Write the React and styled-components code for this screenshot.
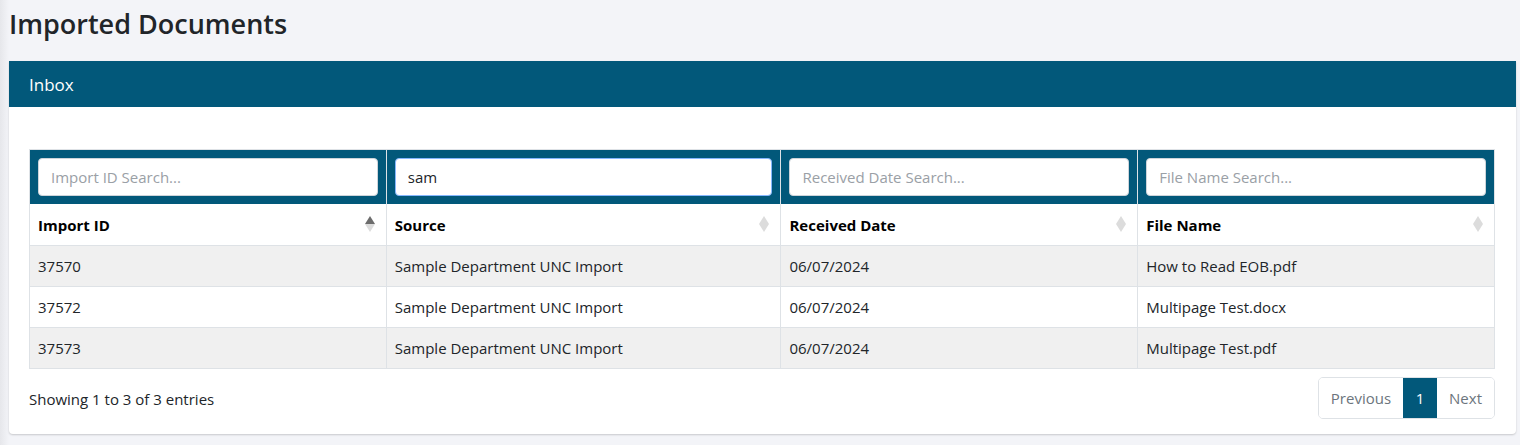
import React, { useState } from 'react';
import styled, { createGlobalStyle } from 'styled-components';

const GlobalStyle = createGlobalStyle`
  body {
    margin: 0;
    background: #f3f4f8;
    font-family: "Open Sans", "Noto Sans", Arial, sans-serif;
    color: #212529;
  }
  * { box-sizing: border-box; }
`;

const Page = styled.main`
  padding: 0 4px 0 9px;
  min-height: 445px;
  background: linear-gradient(to right, #e6e7eb 0, #f3f4f8 9px);
`;

const Title = styled.h1`
  margin: 0;
  padding: 5px 0 0;
  height: 61px;
  font-size: 27px;
  font-weight: 600;
  color: #212529;
`;

const Card = styled.section`
  background: #fff;
  border-radius: 0 0 4px 4px;
  box-shadow: 0 1px 2px rgba(0, 0, 0, 0.18);
`;

const CardHeader = styled.header`
  background: #02587a;
  color: #fff;
  height: 46px;
  padding: 0 20px;
  display: flex;
  align-items: center;
  font-size: 17px;
`;

const CardBody = styled.div`
  padding: 42px 21px 15px 20px;
`;

const Table = styled.table`
  width: 100%;
  border-collapse: collapse;
  font-size: 15px;
  border: 1px solid #dee2e6;
`;

const FilterCell = styled.th`
  background: #02587a;
  padding: 8px 8px;
  border-left: 1px solid #dee2e6;
  &:first-child { border-left: none; }
`;

const SearchInput = styled.input`
  width: 100%;
  height: 38px;
  border: 1px solid #ced4da;
  border-radius: 4px;
  padding: 0 12px;
  font: inherit;
  font-size: 15px;
  font-weight: 400;
  color: #212529;
  outline: none;
  &::placeholder { color: #9aa0a6; }
  ${p => p.$active && `
    border-color: #86b7fe;
  `}
`;

const HeadCell = styled.th`
  text-align: left;
  font-weight: 700;
  color: #000;
  height: 41px;
  padding: 1px 8px 0;
  border: 1px solid #dee2e6;
  border-top: none;
  position: relative;
  width: ${p => p.$w};
`;

const SortIcon = styled.span`
  position: absolute;
  right: 11px;
  top: 50%;
  transform: translateY(-50%);
  display: flex;
  flex-direction: column;
  &::before, &::after {
    content: '';
    width: 0;
    height: 0;
    border-left: 5px solid transparent;
    border-right: 5px solid transparent;
  }
  &::before {
    border-bottom: 8px solid ${p => (p.$dir === 'asc' ? '#6c6c6c' : '#dcdcdc')};
  }
  &::after {
    border-top: 8px solid #dcdcdc;
  }
`;

const Row = styled.tr`
  background: ${p => (p.$odd ? '#f0f0f0' : '#fff')};
`;

const Cell = styled.td`
  height: 41px;
  padding: 0 8px;
  border: 1px solid #dee2e6;
  color: #212529;
`;

const Footer = styled.div`
  display: flex;
  justify-content: space-between;
  align-items: center;
  margin-top: 8px;
  font-size: 15px;
  & > span { padding-top: 3px; }
`;

const Pager = styled.nav`
  display: flex;
  border: 1px solid #dee2e6;
  border-radius: 5px;
  overflow: hidden;
  height: 42px;
`;

const PageButton = styled.button`
  border: none;
  background: ${p => (p.$current ? '#02587a' : '#fff')};
  color: ${p => (p.$current ? '#fff' : '#6c757d')};
  font: inherit;
  font-size: 15px;
  padding: 0 12px;
  min-width: 34px;
  cursor: pointer;
`;

const columns = [
  { key: 'id', label: 'Import ID', placeholder: 'Import ID Search...', w: '357px', sort: 'asc' },
  { key: 'source', label: 'Source', placeholder: 'Source Search...', w: '395px' },
  { key: 'date', label: 'Received Date', placeholder: 'Received Date Search...', w: '357px' },
  { key: 'file', label: 'File Name', placeholder: 'File Name Search...', w: '357px' },
];

const rows = [
  { id: '37570', source: 'Sample Department UNC Import', date: '06/07/2024', file: 'How to Read EOB.pdf' },
  { id: '37572', source: 'Sample Department UNC Import', date: '06/07/2024', file: 'Multipage Test.docx' },
  { id: '37573', source: 'Sample Department UNC Import', date: '06/07/2024', file: 'Multipage Test.pdf' },
];

export default function App() {
  const [filters, setFilters] = useState({ id: '', source: 'sam', date: '', file: '' });

  return (
    <>
      <GlobalStyle />
      <Page>
        <Title>Imported Documents</Title>
        <Card>
          <CardHeader>Inbox</CardHeader>
          <CardBody>
            <Table>
              <thead>
                <tr>
                  {columns.map(col => (
                    <FilterCell key={col.key}>
                      <SearchInput
                        placeholder={col.placeholder}
                        value={filters[col.key]}
                        $active={col.key === 'source'}
                        onChange={e => setFilters({ ...filters, [col.key]: e.target.value })}
                      />
                    </FilterCell>
                  ))}
                </tr>
                <tr>
                  {columns.map(col => (
                    <HeadCell key={col.key} $w={col.w}>
                      {col.label}
                      <SortIcon $dir={col.sort} />
                    </HeadCell>
                  ))}
                </tr>
              </thead>
              <tbody>
                {rows.map((row, i) => (
                  <Row key={row.id} $odd={i % 2 === 0}>
                    {columns.map(col => (
                      <Cell key={col.key}>{row[col.key]}</Cell>
                    ))}
                  </Row>
                ))}
              </tbody>
            </Table>
            <Footer>
              <span>Showing 1 to 3 of 3 entries</span>
              <Pager>
                <PageButton>Previous</PageButton>
                <PageButton $current>1</PageButton>
                <PageButton>Next</PageButton>
              </Pager>
            </Footer>
          </CardBody>
        </Card>
      </Page>
    </>
  );
}
